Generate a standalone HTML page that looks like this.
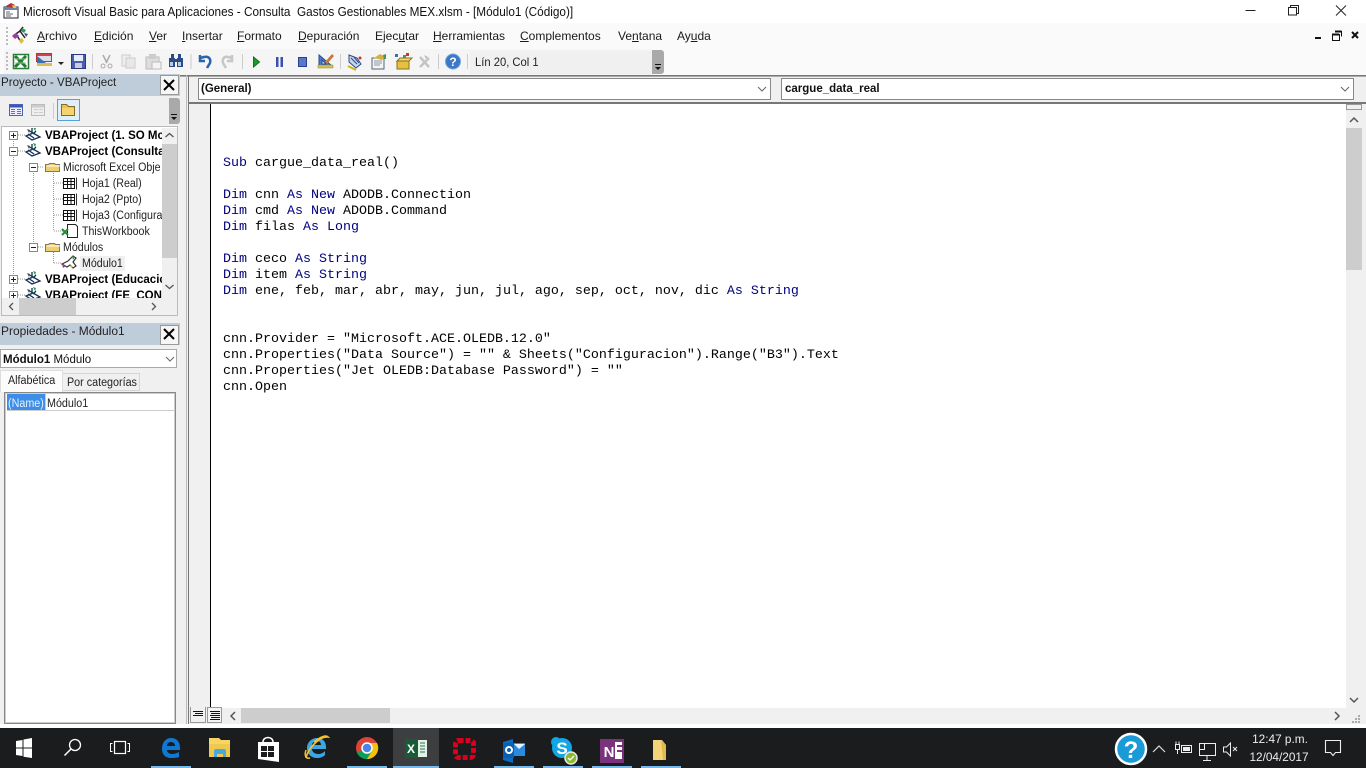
<!DOCTYPE html>
<html><head><meta charset="utf-8"><style>
html,body{margin:0;padding:0;width:1366px;height:768px;overflow:hidden;background:#f0f0f0}
body{position:relative;font-family:"Liberation Sans",sans-serif;font-size:12px;color:#111}
.a{position:absolute}
.t{position:absolute;white-space:pre;line-height:16px}
.m{font-size:12px;top:28px;color:#1a1a1a}
u{text-underline-offset:1px}
.code{position:absolute;left:223px;font:13.33px/16px "Liberation Mono",monospace;white-space:pre;color:#000}
.code b{font-weight:normal;color:#00007f}
svg{position:absolute;overflow:visible}
.tr{font-size:11.5px;color:#222;transform:scaleX(.925);transform-origin:0 0}
.trb{font-weight:bold;font-size:11.5px;color:#000}
.n{transform:scaleX(.935);transform-origin:0 0}
</style></head><body>
<!-- title bar -->
<div class="a" style="left:0;top:0;width:1366px;height:23px;background:#fff"></div>
<svg style="left:3px;top:3px" width="16" height="16"><rect x="1" y="4" width="14" height="11" fill="#fff" stroke="#223"/><rect x="1" y="4" width="14" height="3" fill="#68a"/><path d="M3 9h4M3 11h7M3 13h5" stroke="#666"/><path d="M3 3l5-3 4 2-3 3z" fill="#b33"/><path d="M9 2l4 1v2l-3 0z" fill="#dc4"/></svg>
<div class="t n" style="left:23px;top:4px;font-size:12.6px;color:#111">Microsoft Visual Basic para Aplicaciones - Consulta  Gastos Gestionables MEX.xlsm - [Módulo1 (Código)]</div>
<svg style="left:1240px;top:0" width="126" height="23" fill="none" stroke="#222"><path d="M5.500 10.500h10"/><path d="M50.500 7.500v-2h8v8h-2"/><rect x="48.500" y="7.500" width="8" height="7.500" fill="#fff"/><path d="M96 5.500l10 10M106 5.500l-10 10"/></svg>
<!-- menu bar -->
<div class="a" style="left:0;top:23px;width:1366px;height:52px;background:#fafafa"></div>
<div class="a" style="left:4px;top:49px;width:648px;height:26px;background:#f5f5f5"></div>
<svg style="left:6px;top:26px" width="3" height="20" fill="#bbb"><rect y="1" width="2" height="2"/><rect y="5" width="2" height="2"/><rect y="9" width="2" height="2"/><rect y="13" width="2" height="2"/><rect y="17" width="2" height="2"/></svg>
<svg style="left:11px;top:26px" width="18" height="18"><path d="M2 10l7-5M9 5l5 7M5 8l5 8M9 5l3-4" stroke="#223" stroke-width="1.500" fill="none"/><path d="M1 10l4-3 3 3-4 3z" fill="#a13a9e"/><path d="M11 2l4 2-2 3-3-2z" fill="#2e9a55"/><path d="M8 14l3-2 2 3-3 3z" fill="#d9c22b"/><path d="M13 7l4 1-2 3z" fill="#456"/></svg>
<div class="t m" style="left:37px"><u>A</u>rchivo</div>
<div class="t m" style="left:94px"><u>E</u>dición</div>
<div class="t m" style="left:149px"><u>V</u>er</div>
<div class="t m" style="left:182px"><u>I</u>nsertar</div>
<div class="t m" style="left:237px"><u>F</u>ormato</div>
<div class="t m" style="left:298px"><u>D</u>epuración</div>
<div class="t m" style="left:375px">Ejec<u>u</u>tar</div>
<div class="t m" style="left:433px"><u>H</u>erramientas</div>
<div class="t m" style="left:520px"><u>C</u>omplementos</div>
<div class="t m" style="left:618px">Ve<u>n</u>tana</div>
<div class="t m" style="left:677px">Ay<u>u</u>da</div>
<svg style="left:1310px;top:28px" width="50" height="14"><rect x="5" y="9" width="6" height="2" fill="#111"/><path d="M22.500 6.500h7v6h-7zM25.500 3.500h6v5" fill="none" stroke="#111"/><path d="M22 6.500h7M25 3.500h6.500" stroke="#111" stroke-width="2"/><path d="M42 4l6 6M48 4l-6 6" stroke="#111" stroke-width="2"/></svg>
<!-- toolbar -->
<svg style="left:0;top:48px" width="470" height="27">
<g fill="#bbb"><rect x="6" y="4" width="2" height="2"/><rect x="6" y="8" width="2" height="2"/><rect x="6" y="12" width="2" height="2"/><rect x="6" y="16" width="2" height="2"/><rect x="6" y="20" width="2" height="2"/></g>
<rect x="13.500" y="6.500" width="15" height="14" fill="#fff" stroke="#2a7a3a" stroke-width="1.500"/><path d="M15 8l11 11M26 8L15 19" stroke="#1e7a30" stroke-width="3"/><path d="M15 11h11M15 15h11" stroke="#8c8" />
<rect x="36.500" y="5.500" width="15" height="8" fill="#dde" stroke="#b33"/><path d="M37 6h14v2H37z" fill="#c44"/><path d="M37 8l9 7-9 0z" fill="#3a6fb0"/><rect x="37" y="15" width="15" height="3" fill="#d8c050"/><path d="M58 14h6l-3 3z" fill="#222"/>
<rect x="71.500" y="6.500" width="14" height="14" fill="#4a5fb0" stroke="#2b3a80"/><rect x="74" y="7" width="9" height="6" fill="#e8ecf8"/><rect x="75" y="15" width="7" height="5" fill="#ccd"/>
<path d="M92.500 6v15" stroke="#ccc"/>
<path d="M103 7l4 8M110 7l-4 8" stroke="#aaa" stroke-width="1.500"/><circle cx="103" cy="18" r="2" fill="none" stroke="#aaa"/><circle cx="110" cy="18" r="2" fill="none" stroke="#aaa"/>
<path d="M122 7h8v11h-8z" fill="#eee" stroke="#ccc"/><path d="M126 10h9v10h-9z" fill="#e8e8e8" stroke="#ccc"/>
<path d="M146 9h13v12h-13z" fill="#ddd" stroke="#bbb"/><rect x="149" y="6" width="7" height="5" fill="#ccc"/><path d="M152 14h9v7h-9z" fill="#f4f4f4" stroke="#bbb"/>
<g fill="#2b4a8a"><rect x="169" y="10" width="6" height="9"/><rect x="177" y="10" width="6" height="9"/><rect x="171" y="6" width="3" height="5"/><rect x="178" y="6" width="3" height="5"/><rect x="174" y="11" width="4" height="3"/></g><rect x="170" y="14" width="3" height="4" fill="#bcd"/><rect x="178" y="14" width="3" height="4" fill="#bcd"/>
<path d="M191 6v15" stroke="#ccc"/>
<path d="M200 10l4-1c5-1 7 2 6 6l-3 5M200 7v6h5" fill="none" stroke="#2b62b0" stroke-width="2.500"/>
<path d="M232 10l-4-1c-4-1-6 2-5 6l3 5M232 7v6h-5" fill="none" stroke="#c6c6c6" stroke-width="2.500"/>
<path d="M242.500 6v15" stroke="#ccc"/>
<path d="M253.500 9l6 5-6 5z" fill="#1c9a2c" stroke="#137020"/>
<rect x="276" y="9" width="2.500" height="10" fill="#3a50b0"/><rect x="280.500" y="9" width="2.500" height="10" fill="#3a50b0"/>
<rect x="298.500" y="9.500" width="8" height="9" fill="#5a78c8" stroke="#2b3f90"/>
<path d="M319 7v11h13zM322 12v4h4z" fill="#4d7ac8" stroke="#2b4a8a" fill-rule="evenodd"/><rect x="318" y="17" width="15" height="3" fill="#d8c050" stroke="#9a8a20" stroke-width=".5"/><path d="M325 14l7-8 2 2-7 8z" fill="#c9783a"/>
<path d="M340.500 6v15" stroke="#ccc"/>
<path d="M349 7l8 3 4 6-5 4-7-6z" fill="#c5d4ec" stroke="#2b4a8a"/><path d="M351 10l6 6M354 9l5 6" stroke="#2b4a8a"/><circle cx="360" cy="10" r="1.500" fill="#c33"/><path d="M348 18l8 4" stroke="#d0b020" stroke-width="2"/>
<path d="M372 10h12v11h-12z" fill="#f4f4f4" stroke="#567"/><path d="M374 13h8M374 15h8M374 17h6" stroke="#89a"/><path d="M374 10l6-4 6 3-4 3z" fill="#d8b040"/><path d="M383 7l3-1v5h-2z" fill="#3a9a5a"/>
<path d="M397 13h12v8h-12z" fill="#e8c040" stroke="#8a7020"/><path d="M397 13l3-3h12l-3 3z" fill="#f2d870" stroke="#8a7020"/><rect x="395" y="6" width="3" height="3" fill="#3a6fb0"/><rect x="403" y="7" width="3" height="3" fill="#3a9a5a"/><rect x="406" y="5" width="3" height="3" fill="#c33"/>
<path d="M420 19l9-9M420 9l9 10" stroke="#c4c4c4" stroke-width="2.500"/><path d="M424 7l4 2-2 2z" fill="#bbb"/>
<path d="M438.500 6v15" stroke="#ccc"/>
<circle cx="453" cy="13.500" r="7.500" fill="#3a78c8" stroke="#7aa4dc"/>
<text x="453" y="18" font-family="Liberation Sans" font-size="12" font-weight="bold" fill="#fff" text-anchor="middle">?</text>
<path d="M467.500 6v15" stroke="#ccc"/>
</svg>
<div class="a" style="left:470px;top:51px;width:182px;height:23px;background:#f0f0f0"></div>
<div class="t n" style="left:475px;top:54px;font-size:12px;color:#222">Lín 20, Col 1</div>
<div class="a" style="left:652px;top:50px;width:12px;height:24px;background:#a9a9a9;border-radius:0 3px 3px 0"></div>
<svg style="left:654px;top:64px" width="8" height="8"><path d="M1 .5h6" stroke="#111"/><path d="M1 3h6L4 6z" fill="#111"/></svg>
<div class="a" style="left:0;top:75px;width:1366px;height:1px;background:#777"></div>
<div class="a" style="left:0;top:76px;width:1366px;height:1px;background:#aaa"></div>
<!-- project header -->
<div class="a" style="left:0;top:74px;width:180px;height:22px;background:#bfcddb"></div>
<div class="t n" style="left:1px;top:74px;font-size:12.400px;color:#222">Proyecto - VBAProject</div>
<div class="a" style="left:160px;top:75px;width:17px;height:18px;background:#f6f6f6;border:1px solid #999"></div>
<svg style="left:163px;top:79px" width="12" height="12"><path d="M1 1l10 10M11 1L1 11" stroke="#000" stroke-width="2"/></svg>
<!-- project toolbar -->
<svg style="left:0;top:96px" width="180" height="30">
<rect x="9.500" y="8.500" width="13" height="11" fill="#eef" stroke="#4a62b0"/><rect x="10" y="9" width="12" height="2.500" fill="#3a58b8"/><path d="M11 13.500h4M17 13.500h4M11 15.500h4M17 15.500h4M11 17.500h4M17 17.500h4" stroke="#b56"/>
<rect x="31.500" y="8.500" width="13" height="11" fill="#eee" stroke="#bbb"/><rect x="32" y="9" width="12" height="2.500" fill="#ccc"/><path d="M34 13.500h4M39 13.500h4M34 16.500h4M39 16.500h4" stroke="#ccc"/>
<path d="M53.500 7v16" stroke="#ccc"/>
<rect x="57.500" y="3.500" width="22" height="21" fill="#e0eefa" stroke="#5aa0d8"/>
<path d="M61.500 19.500v-11h5l2 2h6v9z" fill="#efc24a" stroke="#8a6a20"/><path d="M62 12h12v7H62z" fill="#f4d470"/>
</svg>
<div class="a" style="left:169px;top:98px;width:11px;height:26px;background:#a9a9a9;border-radius:0 3px 3px 0"></div>
<svg style="left:170px;top:114px" width="8" height="8"><path d="M1 .5h6" stroke="#111"/><path d="M1 3h6L4 6z" fill="#111"/></svg>
<!-- tree box -->
<div class="a" style="left:1px;top:126px;width:177px;height:190px;background:#fff;border:1px solid #bbb;box-sizing:border-box"></div>
<div class="a" style="left:162px;top:128px;width:15px;height:170px;background:#f0f0f0"></div>
<div class="a" style="left:162px;top:144px;width:15px;height:114px;background:#cdcdcd"></div>
<svg style="left:162px;top:128px" width="15" height="170" fill="none" stroke="#555" stroke-width="1.300"><path d="M3.500 9l4-3.500 4 3.500M3.500 157l4 3.500 4-3.500"/></svg>
<div class="a" style="left:2px;top:298px;width:175px;height:17px;background:#f0f0f0"></div>
<div class="a" style="left:19px;top:298px;width:57px;height:17px;background:#cdcdcd"></div>
<svg style="left:2px;top:298px" width="160" height="17" fill="none" stroke="#555" stroke-width="1.300"><path d="M11 5l-3.500 3.500 3.500 3.500M150 5l3.500 3.500-3.500 3.500"/></svg>
<div class="a" style="left:3px;top:128px;width:159px;height:170px;overflow:hidden">
<svg style="left:-3px;top:-128px" width="165" height="300">
<g stroke="#999" stroke-dasharray="1 1" fill="none"><path d="M13.500 141v150M33.500 173v75M53.500 173v58M53.500 252v11"/><path d="M18 135h8M18 151h8M38 167h6M54 183h9M54 199h9M54 215h9M54 231h9M38 247h6M54 263h7M18 279h8M18 295h8"/></g>
<g fill="#fff" stroke="#888"><rect x="9.500" y="131.500" width="8" height="8"/><rect x="9.500" y="147.500" width="8" height="8"/><rect x="29.500" y="163.500" width="8" height="8"/><rect x="29.500" y="243.500" width="8" height="8"/><rect x="9.500" y="275.500" width="8" height="8"/><rect x="9.500" y="291.500" width="8" height="8"/></g>
<path d="M11 135.500h5M13.500 133v5M11 151.500h5M31 167.500h5M31 247.500h5M11 279.500h5M13.500 277v5M11 295.500h5M13.500 293v5" stroke="#222"/>
<g id="p"><path d="M26 136l6 4 8-3-7-4zM28 130l5 3M32 128v6M36 131l-3 3M28 134l6 4" fill="none" stroke="#135" stroke-width="1.300"/><path d="M33 127l3 1-1 3z" fill="#2a9a3a"/><path d="M27 129l3 1-1 3z" fill="#456"/></g>
<use href="#p" y="16"/><use href="#p" y="144"/><use href="#p" y="160"/>
<g id="f"><path d="M45.500 171.500v-7h3l1-1h5l1 1h4v7z" fill="#efd070" stroke="#777"/><path d="M47 166h13" stroke="#fff"/></g>
<use href="#f" y="80"/>
<g id="s"><path d="M64.500 176.500h12v13h-12z" fill="#fff" stroke="none"/><path d="M63.500 178.500h11v10h-11zM63.500 181.500h11M63.500 184.500h11M67.500 178.500v10M71 178.500v10" fill="none" stroke="#111"/><path d="M76.500 177.500v12" stroke="#333"/></g>
<use href="#s" y="16"/><use href="#s" y="32"/>
<path d="M67.500 224.500h8l2 2v11h-10z" fill="#fff" stroke="#222"/><path d="M62 229l6 6M68 229l-6 6" stroke="#1f8a3a" stroke-width="2"/>
<rect x="80" y="256" width="45" height="15" fill="#f0f0f0"/>
<path d="M62 264l6-3 5-5 3 2-3 4 3 4-3 2-3-3-3 2z" fill="none" stroke="#333" stroke-width="1.200"/><path d="M62 264l4 2-3 2z" fill="#a13a8e"/><path d="M72 256l3 1-2 3z" fill="#3a9a5a"/><path d="M70 265l3 2-2 1z" fill="#d9c22b"/>
</svg>
<div class="t trb" style="left:42px;top:0px">VBAProject (1. SO Mc</div>
<div class="t trb" style="left:42px;top:16px">VBAProject (Consulta</div>
<div class="t tr" style="left:60px;top:32px">Microsoft Excel Obje</div>
<div class="t tr" style="left:79px;top:48px">Hoja1 (Real)</div>
<div class="t tr" style="left:79px;top:64px">Hoja2 (Ppto)</div>
<div class="t tr" style="left:79px;top:80px">Hoja3 (Configura</div>
<div class="t tr" style="left:79px;top:96px">ThisWorkbook</div>
<div class="t tr" style="left:60px;top:112px">Módulos</div>
<div class="t tr" style="left:79px;top:128px">Módulo1</div>
<div class="t trb" style="left:42px;top:144px">VBAProject (Educacic</div>
<div class="t trb" style="left:42px;top:160px">VBAProject (FE_CONS</div>
</div>
<!-- props -->
<div class="a" style="left:0;top:323px;width:180px;height:22px;background:#bfcddb"></div>
<div class="t" style="left:1px;top:323px;font-size:12.400px;color:#222;transform:scaleX(.965);transform-origin:0 0">Propiedades - Módulo1</div>
<div class="a" style="left:160px;top:325px;width:17px;height:18px;background:#f6f6f6;border:1px solid #999"></div>
<svg style="left:163px;top:328px" width="12" height="12"><path d="M1 1l10 10M11 1L1 11" stroke="#000" stroke-width="2"/></svg>
<div class="a" style="left:0;top:349px;width:177px;height:19px;background:#fff;border:1px solid #aaa;box-sizing:border-box"></div>
<div class="t" style="left:3px;top:352px;font-size:11.500px;color:#111"><b>Módulo1</b> Módulo</div>
<svg style="left:165px;top:356px" width="10" height="6" fill="none" stroke="#666"><path d="M1 1l4 4 4-4"/></svg>
<div class="a" style="left:62px;top:373px;width:78px;height:18px;background:#f0f0f0;border:1px solid #d5d5d5;box-sizing:border-box"></div>
<div class="a" style="left:0;top:370px;width:63px;height:22px;background:#fcfcfc;border:1px solid #ddd;border-bottom:none;box-sizing:border-box"></div>
<div class="t n" style="left:8px;top:373px;font-size:11.500px;color:#222">Alfabética</div>
<div class="t n" style="left:67px;top:375px;font-size:11.500px;color:#222">Por categorías</div>
<div class="a" style="left:4px;top:392px;width:172px;height:332px;background:#fff;border:1px solid #888;box-shadow:inset 0 0 0 1px #ccc;box-sizing:border-box"></div>
<div class="a" style="left:7px;top:394px;width:38px;height:16px;background:#3c8ee8"></div>
<div class="a" style="left:7px;top:410px;width:167px;height:1px;background:#ccc"></div>
<div class="a" style="left:45px;top:394px;width:1px;height:16px;background:#ccc"></div>
<div class="t n" style="left:8px;top:396px;font-size:11.500px;color:#e8f2ff">(Name)</div>
<div class="t n" style="left:47px;top:396px;font-size:11.500px;color:#222">Módulo1</div>
<!-- MDI -->
<div class="a" style="left:186px;top:75px;width:1px;height:650px;background:#bbb"></div>
<div class="a" style="left:188px;top:75px;width:1px;height:650px;background:#777"></div>
<div class="a" style="left:189px;top:77px;width:1177px;height:651px;background:#f0f0f0"></div>
<div class="a" style="left:198px;top:78px;width:573px;height:22px;background:#fff;border:1px solid #888;box-sizing:border-box"></div>
<div class="t" style="left:201px;top:81px;font-weight:bold;font-size:11.500px;color:#111">(General)</div>
<svg style="left:757px;top:86px" width="10" height="6" fill="none" stroke="#666"><path d="M1 1l4 4 4-4"/></svg>
<div class="a" style="left:781px;top:78px;width:573px;height:22px;background:#fff;border:1px solid #888;box-sizing:border-box"></div>
<div class="t" style="left:785px;top:81px;font-weight:bold;font-size:11.500px;color:#111">cargue_data_real</div>
<svg style="left:1340px;top:86px" width="10" height="6" fill="none" stroke="#666"><path d="M1 1l4 4 4-4"/></svg>
<div class="a" style="left:188px;top:102px;width:1178px;height:2px;background:#777"></div>
<div class="a" style="left:211px;top:104px;width:1135px;height:604px;background:#fff"></div>
<div class="a" style="left:190px;top:104px;width:20px;height:604px;background:#f0f0f0"></div>
<div class="a" style="left:210px;top:104px;width:1px;height:604px;background:#000"></div>
<!-- scroll -->
<div class="a" style="left:1346px;top:104px;width:16px;height:6px;background:#f0f0f0;border:1px solid #999;box-sizing:border-box"></div>
<div class="a" style="left:1346px;top:128px;width:16px;height:142px;background:#cdcdcd"></div>
<svg style="left:1346px;top:110px" width="16" height="600" fill="none" stroke="#555" stroke-width="1.500"><path d="M4 12l4-4 4 4M4 588l4 4 4-4"/></svg>
<div class="a" style="left:241px;top:708px;width:149px;height:15px;background:#cdcdcd"></div>
<svg style="left:228px;top:708px" width="1120" height="16" fill="none" stroke="#555" stroke-width="1.500"><path d="M7 4l-4 4 4 4M1107 4l4 4-4 4"/></svg>
<div class="a" style="left:190px;top:707px;width:16px;height:16px;background:#f0f0f0;border:1px solid #999;border-top:none;box-sizing:border-box"></div>
<div class="a" style="left:207px;top:707px;width:15px;height:16px;background:#f4f4f4;border:1px solid #999;box-sizing:border-box"></div>
<svg style="left:190px;top:707px" width="32" height="16" stroke="#111"><path d="M3 4.500h10M5 6.500h8M3 8.500h10M20 4.500h10M21 6.500h9M20 8.500h10M21 10.500h9M20 12.500h10"/></svg>
<svg style="left:1352px;top:714px" width="10" height="10" fill="#aaa"><rect x="6" y="1" width="2" height="2"/><rect x="3" y="4" width="2" height="2"/><rect x="6" y="4" width="2" height="2"/><rect x="0" y="7" width="2" height="2"/><rect x="3" y="7" width="2" height="2"/><rect x="6" y="7" width="2" height="2"/></svg>
<!-- code -->
<div class="code" style="top:156px"><b>Sub</b> cargue_data_real()

<b>Dim</b> cnn <b>As</b> <b>New</b> ADODB.Connection
<b>Dim</b> cmd <b>As</b> <b>New</b> ADODB.Command
<b>Dim</b> filas <b>As</b> <b>Long</b>

<b>Dim</b> ceco <b>As</b> <b>String</b>
<b>Dim</b> item <b>As</b> <b>String</b>
<b>Dim</b> ene, feb, mar, abr, may, jun, jul, ago, sep, oct, nov, dic <b>As</b> <b>String</b>


cnn.Provider = "Microsoft.ACE.OLEDB.12.0"
cnn.Properties("Data Source") = "" &amp; Sheets("Configuracion").Range("B3").Text
cnn.Properties("Jet OLEDB:Database Password") = ""
cnn.Open</div>
<!-- white strip / taskbar -->
<div class="a" style="left:0;top:724px;width:1366px;height:4px;background:#fff"></div>
<div class="a" style="left:0;top:728px;width:1366px;height:40px;background:#1b1c1e"></div>
<div class="a" style="left:393px;top:728px;width:46px;height:40px;background:#3d3e40"></div>
<div class="a" style="left:151px;top:766px;width:40px;height:2px;background:#76b9ed"></div>
<div class="a" style="left:347px;top:766px;width:40px;height:2px;background:#76b9ed"></div>
<div class="a" style="left:393px;top:766px;width:46px;height:2px;background:#76b9ed"></div>
<div class="a" style="left:494px;top:766px;width:40px;height:2px;background:#76b9ed"></div>
<div class="a" style="left:543px;top:766px;width:40px;height:2px;background:#76b9ed"></div>
<div class="a" style="left:592px;top:766px;width:40px;height:2px;background:#76b9ed"></div>
<div class="a" style="left:641px;top:766px;width:40px;height:2px;background:#76b9ed"></div>
<svg style="left:0;top:728px" width="700" height="40">
<path d="M16 13l6.500-1v7.500H16zM23.500 11.500L32 10v9.500h-8.500zM16 20.500h6.500V28L16 27zM23.500 20.500H32V30l-8.500-1.300z" fill="#fff"/>
<circle cx="75" cy="17" r="5.500" fill="none" stroke="#fff" stroke-width="1.300"/><path d="M71 21l-6.500 6.500" stroke="#fff" stroke-width="1.500"/>
<rect x="114.500" y="13.500" width="11" height="12" fill="none" stroke="#fff" stroke-width="1.200"/><path d="M112.500 15.500h-2v8h2M127.500 15.500h2v8h-2" fill="none" stroke="#fff"/>
<path d="M162 21c0-7 4-11 9-11 6 0 9 4 9 10v2h-13c0 3 3 4 5 4 3 0 5-1 7-2v5c-3 1-5 1-8 1-6 0-9-4-9-9zm5-3h8c0-3-2-4-4-4s-4 1-4 4z" fill="#0f78d4"/>
<path d="M209 10h10l2 2h9v5h-21z" fill="#f6d565"/><path d="M209 16h21v13h-21z" fill="#eec94e"/><path d="M214 29v-6c0-1 1-2 2-2h8c1 0 2 1 2 2v6h-3v-3h-6v3z" fill="#4aa8e0"/>
<path d="M258 14h21v20l-21-3z" fill="#fff"/><path d="M263 14c0-6 10-6 10 0" fill="none" stroke="#fff" stroke-width="1.500"/><path d="M261 18h6v5h-6zM268 18h6v5h-6zM261 24h6v5h-6zM268 24h6v5h-6z" fill="#1b1c1e"/>
<path d="M307 20c0-6 5-10 10-10s9 3 9 9v2h-14c0 3 3 5 6 5 3 0 5-1 7-3v4c-2 2-5 3-8 3-6 0-10-4-10-10zm5-3h9c0-3-2-4-4-4-3 0-5 2-5 4z" fill="#3aa6e4"/><path d="M306 30c2-10 14-22 22-21-3-3-9 1-14 5" fill="none" stroke="#f4c430" stroke-width="1.600"/><path d="M306 22c-2 6 0 9 4 8" fill="none" stroke="#f4c430" stroke-width="1.500"/>
<circle cx="367" cy="20" r="11" fill="#db4437"/><path d="M357 25a11 11 0 0 0 12 6l5-9h-12z" fill="#0f9d58"/><path d="M367 31a11 11 0 0 0 10-16h-10l5 8z" fill="#f4c20d"/><path d="M358 13l5 9" stroke="#db4437"/><circle cx="367" cy="20" r="5" fill="#4a86e8" stroke="#fff" stroke-width="1.500"/>
<rect x="405" y="11" width="13" height="19" fill="#185c37"/><rect x="418" y="12" width="9" height="17" fill="#e6efe8"/><path d="M420 15h5M420 18h5M420 21h5M420 24h5" stroke="#2a7a4a"/>
<text x="411" y="25" font-family="Liberation Sans" font-size="12" font-weight="bold" fill="#fff" text-anchor="middle">X</text>
<rect x="455.500" y="12.500" width="18" height="17" rx="3" fill="none" stroke="#d8001f" stroke-width="5" stroke-dasharray="5 2"/>
<path d="M503 14l10-3v24l-10-3z" fill="#0a6cc2"/><path d="M513 15h12v13h-12z" fill="#2a8ae0"/><path d="M514 16l5 5 6-5z" fill="#e8f3fc"/><rect x="503" y="15" width="11" height="15" fill="#0b5fae"/><circle cx="509" cy="22" r="3" fill="none" stroke="#fff" stroke-width="2"/>
<circle cx="562" cy="20" r="10" fill="#12a6e4"/><circle cx="556" cy="14" r="5" fill="#12a6e4"/><text x="562" y="26" font-family="Liberation Sans" font-size="17" font-weight="bold" fill="#fff" text-anchor="middle">S</text>
<circle cx="571" cy="30" r="6" fill="#8ab832" stroke="#e8e8e8" stroke-width="1.500"/><path d="M568 30l2 2 4-4" fill="none" stroke="#fff" stroke-width="1.300"/>
<rect x="600" y="11" width="24" height="24" fill="#7b327c"/><rect x="615" y="14" width="7" height="17" fill="#fff"/><path d="M617 17h5v2h-5zM617 22h5v2h-5z" fill="#7b327c"/>
<text x="609" y="29" font-family="Liberation Sans" font-size="15" font-weight="bold" fill="#fff" text-anchor="middle">N</text>
<path d="M653 12h9l4 5v15h-13z" fill="#f3d477"/><path d="M661 12l5 5v15h-3z" fill="#e3b94d"/>
</svg>
<svg style="left:1110px;top:728px" width="256" height="40">
<circle cx="21" cy="21" r="15" fill="#1a9ad6" stroke="#fff" stroke-width="2.500"/>
<text x="21" y="30" font-family="Liberation Sans" font-size="24" font-weight="bold" fill="#fff" text-anchor="middle">?</text>
<path d="M43 24l6-6 6 6" fill="none" stroke="#ddd" stroke-width="1.200"/>
<rect x="71.500" y="17.500" width="10" height="7" fill="none" stroke="#eee"/><rect x="73" y="19" width="7" height="4" fill="#eee"/><path d="M65.500 16.500h4v5h-4zM67.500 21v5M66 13.500v3M69 13.500v3" fill="none" stroke="#eee"/>
<path d="M89.500 15.500h16v12h-16zM93 32.500h8M97 27.500v5" fill="none" stroke="#eee"/><rect x="89.500" y="15.500" width="5" height="6" fill="#1b1c1e" stroke="#eee"/>
<path d="M113.500 19h3l4-4v13l-4-4h-3z" fill="none" stroke="#eee"/><path d="M123 19l4 4M127 19l-4 4" stroke="#eee"/>
<path d="M215.500 12.500h15v12h-5l-2.500 3-2.500-3h-5z" fill="none" stroke="#eee" stroke-width="1.100"/>
</svg>
<div class="t" style="left:1252px;top:731px;font-size:11.800px;color:#eee;width:56px;text-align:center">12:47 p.m.</div>
<div class="t" style="left:1249px;top:749px;font-size:11.800px;color:#eee;width:60px;text-align:center">12/04/2017</div>
</body></html>
